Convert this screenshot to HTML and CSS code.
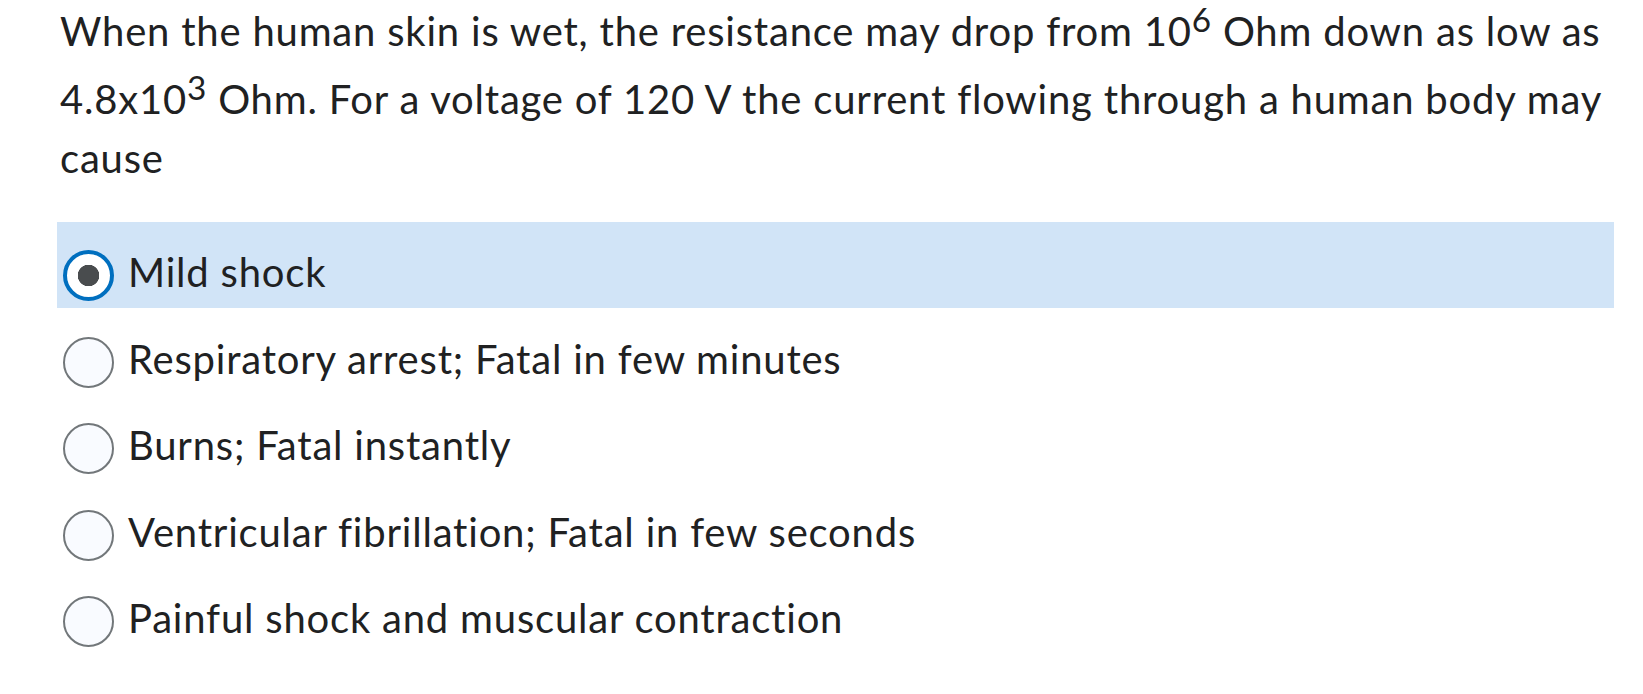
FILE: index.html
```html
<!DOCTYPE html>
<html lang="en">
<head>
<meta charset="utf-8">
<title>Question</title>
<link rel="stylesheet" href="styles.css">
</head>
<body>
<div class="page">
  <p class="question">When the human skin is wet, the resistance may drop from 10<sup>6</sup> Ohm down as low as 4.8x10<sup>3</sup> Ohm. For a voltage of 120 V the current flowing through a human body may cause</p>
  <div class="options">
    <label class="option selected"><input class="radio" type="radio" name="q1" checked><span class="text">Mild shock</span></label>
    <label class="option"><input class="radio" type="radio" name="q1"><span class="text">Respiratory arrest; Fatal in few minutes</span></label>
    <label class="option"><input class="radio" type="radio" name="q1"><span class="text">Burns; Fatal instantly</span></label>
    <label class="option"><input class="radio" type="radio" name="q1"><span class="text">Ventricular fibrillation; Fatal in few seconds</span></label>
    <label class="option"><input class="radio" type="radio" name="q1"><span class="text">Painful shock and muscular contraction</span></label>
  </div>
</div>
</body>
</html>
```

FILE: styles.css
```css
html, body {
  margin: 0;
  padding: 0;
  background: #ffffff;
}

body {
  font-family: Lato, "Noto Sans", sans-serif;
  color: #202122;
  letter-spacing: 0.8px;
  font-variant-ligatures: none;
  font-feature-settings: "liga" 0, "clig" 0;
}

.page {
  display: flex;
  flex-direction: column;
  padding: 0 29px 0 57px;
}

.question {
  margin: -8px 0 0;
  padding-left: 3px;
  font-size: 40px;
  line-height: 58px;
  font-weight: 400;
}

.question sup {
  font-size: smaller;
  line-height: 55px;
  vertical-align: super;
}

.options {
  margin-top: 35.5px;
  display: flex;
  flex-direction: column;
  gap: 1px;
}

.option {
  display: flex;
  align-items: center;
  gap: 14px;
  padding: 28px 0 6.5px 6px;
  font-size: 40px;
  line-height: 48px;
}

.option.selected {
  background: #d1e4f7;
}

.text {
  margin-top: -7px;
}

.radio {
  appearance: none;
  -webkit-appearance: none;
  box-sizing: border-box;
  flex: none;
  margin: 0;
  width: 51px;
  height: 51px;
  border-radius: 50%;
  border: 2px solid #72777a;
  background: #f9fbff;
}

.radio:checked {
  border: 4.5px solid #006fbf;
  background: radial-gradient(circle, #494c4e 0 10.5px, #ffffff 11px);
}
```
